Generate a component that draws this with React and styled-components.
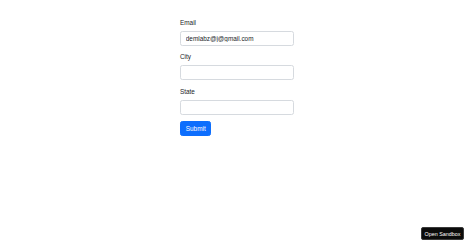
import React from "react";
import styled, { createGlobalStyle } from "styled-components";

const Global = createGlobalStyle`
  html, body { margin: 0; padding: 0; background: #fff; }
  body { font-family: "Liberation Sans", Arial, sans-serif; color: #212529; }
`;

const Page = styled.div`
  width: 474px;
  height: 248px;
  position: relative;
  overflow: hidden;
`;

const Form = styled.form`
  margin-left: 180px;
  padding-top: 18px;
  width: 114px;
  display: flex;
  flex-direction: column;
`;

const Field = styled.div`
  display: flex;
  flex-direction: column;
  margin-bottom: 6.4px;
`;

const Label = styled.label`
  font-size: 6.4px;
  line-height: 9.6px;
  margin-bottom: 3.2px;
  color: #212529;
`;

const Input = styled.input`
  box-sizing: border-box;
  height: 15.2px;
  width: 114px;
  border: 0.6px solid #d6dadf;
  border-radius: 2.4px;
  padding: 0 4.8px;
  font-family: "Liberation Sans", Arial, sans-serif;
  font-size: 6.4px;
  color: #212529;
  outline: none;
`;

const Button = styled.button`
  align-self: flex-start;
  box-sizing: border-box;
  height: 15.2px;
  padding: 0 4.8px;
  background: #0d6efd;
  border: 0.6px solid #0d6efd;
  border-radius: 2.4px;
  color: #fff;
  font-family: "Liberation Sans", Arial, sans-serif;
  font-size: 6.4px;
`;

const Sandbox = styled.button`
  position: absolute;
  right: 10px;
  bottom: 8px;
  box-sizing: border-box;
  width: 43px;
  height: 13px;
  padding: 0;
  background: #0b0b0b;
  border: 0.6px solid #3a3a3a;
  border-radius: 2px;
  color: #fff;
  font-family: "Liberation Sans", Arial, sans-serif;
  font-size: 5.4px;
`;

export default function App() {
  return (
    <Page>
      <Global />
      <Form onSubmit={(e) => e.preventDefault()}>
        <Field>
          <Label>Email</Label>
          <Input defaultValue="demlabz@j@gmail.com" />
        </Field>
        <Field>
          <Label>City</Label>
          <Input />
        </Field>
        <Field>
          <Label>State</Label>
          <Input />
        </Field>
        <Button type="submit">Submit</Button>
      </Form>
      <Sandbox>Open Sandbox</Sandbox>
    </Page>
  );
}
